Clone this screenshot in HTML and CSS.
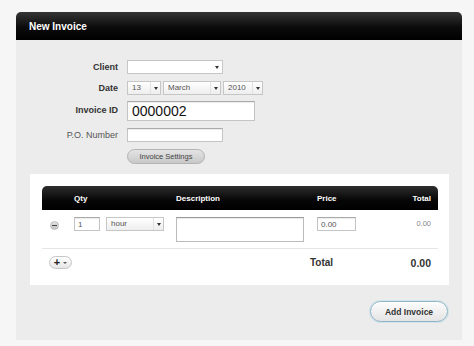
FILE: index.html
```html
<!DOCTYPE html>
<html lang="en">
<head>
	<meta charset="UTF-8">
	<title>New Invoice</title>
	<link rel="stylesheet" href="styles.css">
</head>
<body>
	<div class="panel">
		<h2 class="panel-head">New Invoice</h2>
		<div class="panel-body">
			<!-- invoice fields -->
			<div class="fields">
				<label class="lbl">Client</label>
				<div class="ctl">
					<span class="select w-client"><span class="val"></span><span class="arrow"></span></span>
				</div>

				<label class="lbl">Date</label>
				<div class="ctl">
					<span class="select shaded w-day"><span class="val">13</span><span class="arrow"></span></span>
					<span class="select shaded w-month"><span class="val">March</span><span class="arrow"></span></span>
					<span class="select shaded w-year"><span class="val">2010</span><span class="arrow"></span></span>
				</div>

				<label class="lbl lbl-id">Invoice ID</label>
				<div class="ctl ctl-id"><input class="txt big" type="text" value="0000002"></div>

				<label class="lbl plain">P.O. Number</label>
				<div class="ctl"><input class="txt w-po" type="text" value=""></div>

				<span></span>
				<div class="ctl"><button class="btn-grey">Invoice Settings</button></div>
			</div>

			<!-- line items -->
			<div class="lines">
				<div class="grid thead">
					<span></span>
					<span>Qty</span>
					<span></span>
					<span>Description</span>
					<span>Price</span>
					<span class="r">Total</span>
				</div>
				<div class="grid row">
					<span class="minus"></span>
					<input class="txt w-qty" type="text" value="1">
					<span class="select shaded w-unit"><span class="val">hour</span><span class="arrow"></span></span>
					<textarea class="txt area"></textarea>
					<input class="txt w-price" type="text" value="0.00">
					<span class="r line-total">0.00</span>
				</div>
				<div class="tfoot">
					<span class="btn-plus">+<span class="caret"></span></span>
					<div class="sum">
						<span>Total</span>
						<span class="sum-val">0.00</span>
					</div>
				</div>
			</div>

			<div class="actions">
				<button class="btn-add">Add Invoice</button>
			</div>
		</div>
	</div>
</body>
</html>
```

FILE: styles.css
```css
*{box-sizing:border-box;}
body{margin:0;padding:12px 0 0 16px;background:#f6f6f6;font-family:"Liberation Sans",Arial,sans-serif;color:#333;}
.panel{width:446px;}
.panel-head{margin:0;height:28px;line-height:29px;padding-left:13px;font-size:10px;font-weight:bold;color:#fff;
	background:linear-gradient(#353535,#0b0b0b 55%,#000);border-radius:5px 5px 0 0;}
.panel-body{background:#ececec;padding:20px 13px 18px 14px;}

/* form */
.fields{display:grid;grid-template-columns:88px auto;column-gap:9px;row-gap:7px;align-items:center;}
.lbl{text-align:right;font-size:9px;font-weight:bold;color:#333;}
.lbl.plain{font-weight:normal;color:#555;}
.lbl-id{margin-top:-3px;}
.ctl{display:flex;gap:2px;}
.ctl-id{margin-top:-1px;}

.select{display:flex;height:14px;border:1px solid #c6c6c6;background:#fff;font-size:8px;color:#555;}
.select.shaded{background:linear-gradient(#fff,#eee);}
.select .val{flex:1;padding-left:4px;line-height:12px;}
.select .arrow{width:10px;display:flex;align-items:center;justify-content:center;}
.select.shaded .arrow{border-left:1px solid #e2e2e2;}
.select .arrow::after{content:"";border-left:2.5px solid transparent;border-right:2.5px solid transparent;border-top:3px solid #333;}
.w-client{width:96px;}
.w-day{width:34px;}
.w-month{width:58px;}
.w-year{width:40px;}
.w-unit{width:58px;}

.txt{height:14px;margin:0;padding:0 3px;border:1px solid #c4c4c4;border-top-color:#aaa;background:#fff;
	box-shadow:inset 0 1px 1px rgba(0,0,0,.08);font-family:inherit;font-size:8px;color:#555;outline:none;}
.big{width:128px;height:20px;font-size:14px;color:#111;padding:0 4px;}
.w-po{width:96px;}
.w-qty{width:26px;}
.w-price{width:39px;}
.area{width:128px;height:25px;resize:none;border-color:#bbb;border-top-color:#999;}

.btn-grey{width:78px;height:15px;padding:0;border:1px solid #b3b3b3;border-radius:8px;
	background:linear-gradient(#e4e4e4,#c8c8c8);font-family:inherit;font-size:7.5px;color:#444;}

/* line items */
.lines{margin-top:10px;background:#fff;padding:12px 11px 16px 12px;}
.grid{display:grid;grid-template-columns:32px 32px 70px 141px 60px 1fr;padding-right:7px;}
.thead{height:24px;align-items:center;background:linear-gradient(#2e2e2e,#060606 60%,#000);border-radius:5px 5px 0 0;
	color:#fff;font-size:8px;font-weight:bold;}
.r{text-align:right;}
.row{padding-top:7px;padding-bottom:6px;border-bottom:1px solid #e6e6e6;align-items:start;}
.minus{width:9px;height:9px;margin:4px 0 0 8px;border-radius:50%;background:linear-gradient(#e2e2e2,#c4c4c4);
	border:1px solid #bdbdbd;display:flex;align-items:center;justify-content:center;}
.minus::after{content:"";width:5px;height:1.5px;background:#444;}
.line-total{font-size:7.5px;color:#888;line-height:14px;}

.tfoot{display:flex;align-items:center;padding:7px 7px 0 7px;}
.btn-plus{width:23px;height:13px;border:1px solid #c6c6c6;border-radius:7px;background:linear-gradient(#fff,#e6e6e6);
	display:flex;align-items:center;justify-content:center;gap:3px;font-size:11px;font-weight:bold;line-height:11px;color:#222;}
.btn-plus .caret{border-left:2px solid transparent;border-right:2px solid transparent;border-top:2.5px solid #555;}
.sum{margin-left:auto;width:121px;display:flex;justify-content:space-between;align-items:center;font-size:10px;font-weight:bold;color:#333;}
.sum-val{font-size:10.5px;}

.actions{display:flex;justify-content:flex-end;margin-top:16px;padding-right:1px;}
.btn-add{width:78px;height:21px;padding:0;border:1px solid #8eb4c6;border-radius:11px;
	box-shadow:0 0 0 1px #d2e3ea,inset 0 1px 0 #fff;background:linear-gradient(#fdfdfd,#e4e4e4);
	font-family:inherit;font-size:8.5px;font-weight:bold;color:#333;}
```
